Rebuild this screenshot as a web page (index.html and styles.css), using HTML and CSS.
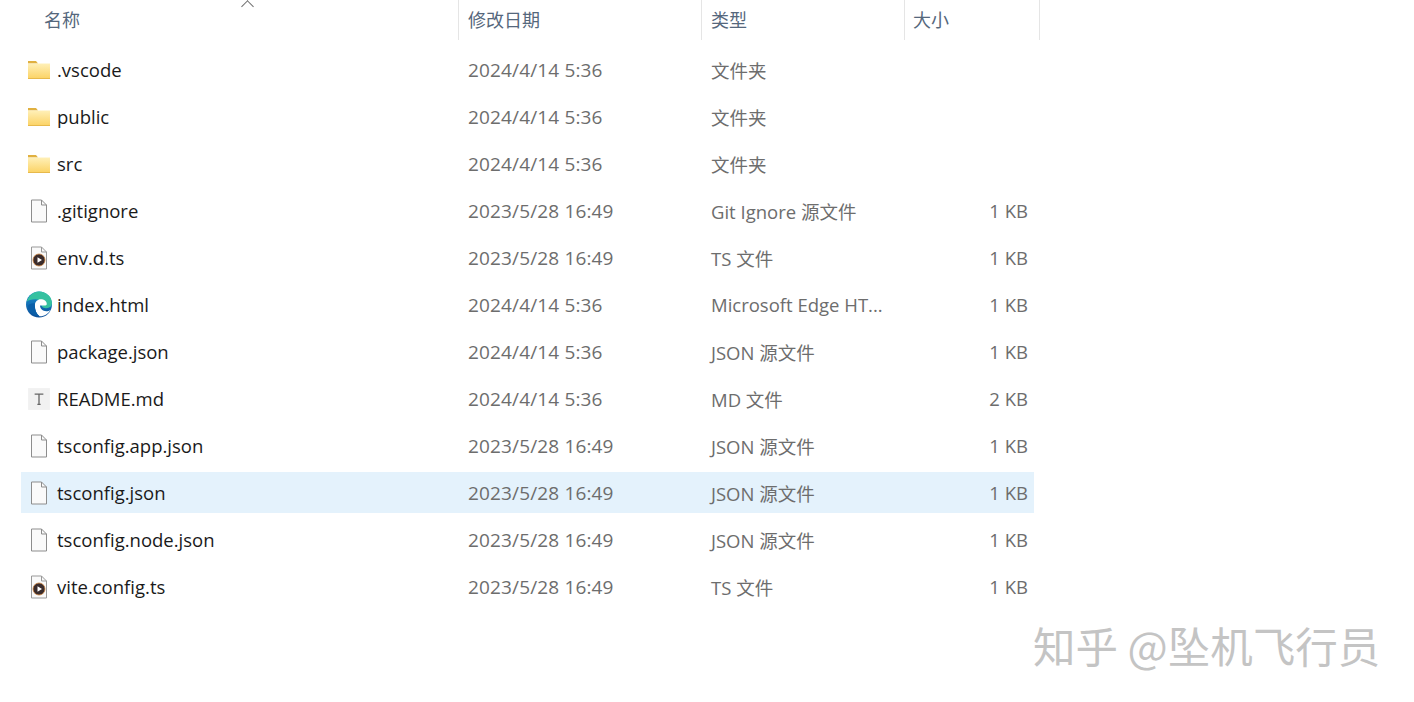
FILE: index.html
```html
<!DOCTYPE html>
<html lang="zh-CN">
<head>
    <meta charset="UTF-8">
    <title>文件列表</title>
    <link rel="stylesheet" href="styles.css">
</head>
<body>

    <svg class="defs" width="0" height="0">
        <defs>
            <linearGradient id="folderFill" x1="0" y1="0" x2="0" y2="1">
                <stop offset="0" stop-color="#fff0b8"/>
                <stop offset="1" stop-color="#fbd263"/>
            </linearGradient>
            <linearGradient id="edgeBlue" x1="0" y1="0" x2="0" y2="1">
                <stop offset="0" stop-color="#1a8fd0"/>
                <stop offset="1" stop-color="#0c4f9a"/>
            </linearGradient>
            <symbol id="folder" viewBox="0 0 24 20">
                <path d="M1 1h8l2 2.500H1z" fill="#e0b040"/>
                <path d="M1 3.500h22V19H1z" fill="url(#folderFill)"/>
                <path d="M1 18.200h22V19H1z" fill="#e3b345"/>
            </symbol>
            <symbol id="file" viewBox="0 0 20 24">
                <path d="M2.500 1H12.500L17.500 6V23H2.500z" fill="#fafafa" stroke="#8d8d8d"/>
                <path d="M12.500 1V6H17.500" fill="none" stroke="#8d8d8d"/>
            </symbol>
            <symbol id="media" viewBox="0 0 20 24">
                <path d="M2.500 1H12.500L17.500 6V23H2.500z" fill="#fafafa" stroke="#999"/>
                <path d="M12.500 1V6H17.500" fill="none" stroke="#999"/>
                <circle cx="10" cy="14" r="6" fill="#3a2c2c"/>
                <circle cx="10" cy="14" r="6" fill="none" stroke="#c9803c" stroke-width=".8"/>
                <path d="M8.500 11.300L13 14l-4.500 2.700z" fill="#fff"/>
            </symbol>
            <symbol id="edge" viewBox="0 0 26 26">
                <circle cx="13" cy="13" r="12.500" fill="url(#edgeBlue)"/>
                <path d="M1 11C3 4 8 .5 13 .5c7 0 12.500 5 12.500 11 0 3-2 5-5.500 5-2.500 0-4.500-1-4.500-2.500 0-2-1-6-6-6-4 0-7 1-8.500 2.500z" fill="#35c1a0"/>
                <path d="M9 14c0-4 3-6 5.500-6 3.500 0 6 2 6 4.500 0 1-1 1.500-2.500 1.500H14c0 3 2.500 5.500 6 5.500 1.500 0 3-.5 4-1.200-2 3.700-6 6.200-10.500 6-3-2-4.500-6-4.500-10.300z" fill="#fff"/>
                <path d="M9 14c0 4.300 1.500 8.300 4.500 10.300C8 23.800 2 20 2.500 14c1.500-1.500 4-2.500 6.500-2z" fill="#0b5fa8"/>
            </symbol>
            <symbol id="text" viewBox="0 0 24 22">
                <path d="M2 1h20v20H2z" fill="#f1f1f1"/>
                <path d="M8 6.500h8M12 6.500V16M10.500 16h3" fill="none" stroke="#666" stroke-width="1.200"/>
            </symbol>
        </defs>
    </svg>

    <div class="explorer">
        <div class="list-head">
            <div class="col-title col-name">名称<span class="sort-caret"></span></div>
            <div class="col-title">修改日期</div>
            <div class="col-title">类型</div>
            <div class="col-title col-size">大小</div>
        </div>

        <div class="list-body">
            <div class="row">
                <div class="cell-name"><svg class="icon icon-folder"><use href="#folder"/></svg>.vscode</div>
                <div class="cell-date">2024/4/14 5:36</div>
                <div class="cell">文件夹</div>
                <div class="cell-size"></div>
            </div>
            <div class="row">
                <div class="cell-name"><svg class="icon icon-folder"><use href="#folder"/></svg>public</div>
                <div class="cell-date">2024/4/14 5:36</div>
                <div class="cell">文件夹</div>
                <div class="cell-size"></div>
            </div>
            <div class="row">
                <div class="cell-name"><svg class="icon icon-folder"><use href="#folder"/></svg>src</div>
                <div class="cell-date">2024/4/14 5:36</div>
                <div class="cell">文件夹</div>
                <div class="cell-size"></div>
            </div>
            <div class="row">
                <div class="cell-name"><svg class="icon"><use href="#file"/></svg>.gitignore</div>
                <div class="cell-date">2023/5/28 16:49</div>
                <div class="cell">Git Ignore 源文件</div>
                <div class="cell-size">1 KB</div>
            </div>
            <div class="row">
                <div class="cell-name"><svg class="icon"><use href="#media"/></svg>env.d.ts</div>
                <div class="cell-date">2023/5/28 16:49</div>
                <div class="cell">TS 文件</div>
                <div class="cell-size">1 KB</div>
            </div>
            <div class="row">
                <div class="cell-name"><svg class="icon icon-edge"><use href="#edge"/></svg>index.html</div>
                <div class="cell-date">2024/4/14 5:36</div>
                <div class="cell">Microsoft Edge HT...</div>
                <div class="cell-size">1 KB</div>
            </div>
            <div class="row">
                <div class="cell-name"><svg class="icon"><use href="#file"/></svg>package.json</div>
                <div class="cell-date">2024/4/14 5:36</div>
                <div class="cell">JSON 源文件</div>
                <div class="cell-size">1 KB</div>
            </div>
            <div class="row">
                <div class="cell-name"><svg class="icon"><use href="#text"/></svg>README.md</div>
                <div class="cell-date">2024/4/14 5:36</div>
                <div class="cell">MD 文件</div>
                <div class="cell-size">2 KB</div>
            </div>
            <div class="row">
                <div class="cell-name"><svg class="icon"><use href="#file"/></svg>tsconfig.app.json</div>
                <div class="cell-date">2023/5/28 16:49</div>
                <div class="cell">JSON 源文件</div>
                <div class="cell-size">1 KB</div>
            </div>
            <div class="row selected">
                <div class="cell-name"><svg class="icon"><use href="#file"/></svg>tsconfig.json</div>
                <div class="cell-date">2023/5/28 16:49</div>
                <div class="cell">JSON 源文件</div>
                <div class="cell-size">1 KB</div>
            </div>
            <div class="row">
                <div class="cell-name"><svg class="icon"><use href="#file"/></svg>tsconfig.node.json</div>
                <div class="cell-date">2023/5/28 16:49</div>
                <div class="cell">JSON 源文件</div>
                <div class="cell-size">1 KB</div>
            </div>
            <div class="row">
                <div class="cell-name"><svg class="icon"><use href="#media"/></svg>vite.config.ts</div>
                <div class="cell-date">2023/5/28 16:49</div>
                <div class="cell">TS 文件</div>
                <div class="cell-size">1 KB</div>
            </div>
        </div>
    </div>

    <div class="watermark">知乎 @坠机飞行员</div>

</body>
</html>
```

FILE: styles.css
```css
* {margin: 0; padding: 0; box-sizing: border-box;}

html, body {
    height: 702px;
    overflow: hidden;
}

body {
    position: relative;
    background: #fff;
    font-family: "Open Sans", "Noto Sans CJK SC", sans-serif;
    font-size: 18.5px;
}

.defs { position: absolute; }

.explorer {
    width: 1040px;
    padding-left: 21px;
}

.list-head {
    display: grid;
    grid-template-columns: 438px 243px 203px 135px;
    height: 40px;
}

.col-title {
    position: relative;
    padding: 7px 0 0 9px;
    border-right: 1px solid #e5e5e5;
    line-height: 26px;
    font-size: 18px;
    color: #55677c;
}

.col-title.col-name { padding-left: 23px; }
.col-title.col-size { padding-left: 8px; }

.sort-caret {
    position: absolute;
    top: 0;
    left: 222px;
    width: 9px;
    height: 9px;
    border-top: 1px solid #6d6d6d;
    border-left: 1px solid #6d6d6d;
    transform: translateY(2px) rotate(45deg);
}

.list-body {
    display: flex;
    flex-direction: column;
    gap: 6px;
    padding-top: 9px;
}

.row {
    display: grid;
    grid-template-columns: 447px 243px 204px 119px;
    align-items: center;
    width: 1013px;
    height: 41px;
}

.row.selected { background: #e4f2fc; }

.cell-name {
    display: flex;
    align-items: center;
    gap: 3px;
    padding-left: 3px;
    color: #1a1a1a;
}

.icon {
    width: 30px;
    height: 24px;
    flex-shrink: 0;
}

.icon-folder { height: 20px; }
.icon-edge { height: 27px; }

.cell-date {
    font-size: 19px;
    letter-spacing: .15px;
    color: #6d6d6d;
}

.cell { color: #6d6d6d; }

.cell-size {
    padding-right: 6px;
    text-align: right;
    color: #6d6d6d;
}

.watermark {
    position: absolute;
    left: 1033px;
    top: 615px;
    font-family: "Noto Sans CJK SC", sans-serif;
    font-size: 42.500px;
    line-height: 60px;
    white-space: nowrap;
    color: #c4c4c4;
    text-shadow: 1px 1px 0 #fff;
}
```
